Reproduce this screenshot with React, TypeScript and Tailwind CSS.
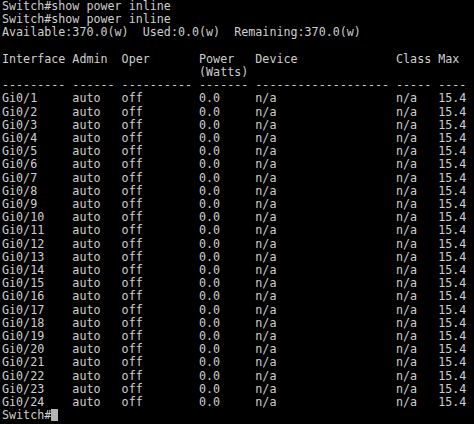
const ports = Array.from({ length: 24 }, (_, i) => `Gi0/${i + 1}`);

const row = (cols: string[]) => {
  const widths = [10, 7, 11, 8, 20, 6, 4];
  return cols.map((c, i) => c.padEnd(widths[i])).join("").trimEnd();
};

const lines = [
  "Switch#show power inline",
  "Switch#show power inline",
  "Available:370.0(w)  Used:0.0(w)  Remaining:370.0(w)",
  "",
  row(["Interface", "Admin", "Oper", "Power", "Device", "Class", "Max"]),
  row(["", "", "", "(Watts)"]),
  row(["---------", "------", "----------", "-------", "-------------------", "-----", "----"]),
  ...ports.map((p) => row([p, "auto", "off", "0.0", "n/a", "n/a", "15.4"])),
];

export default function App() {
  return (
    <div className="w-[474px] h-[424px] overflow-hidden bg-black">
      <pre
        className="pl-[2px] text-[11.7px] leading-[13.2px] text-[#cfcfcf]"
        style={{ fontFamily: '"DejaVu Sans Mono", "Liberation Mono", monospace' }}
      >
        {lines.join("\n")}
        {"\n"}
        Switch#
        <span className="inline-block w-[7px] h-[12px] align-[-2px] bg-[#b4b4b4]" />
      </pre>
    </div>
  );
}
